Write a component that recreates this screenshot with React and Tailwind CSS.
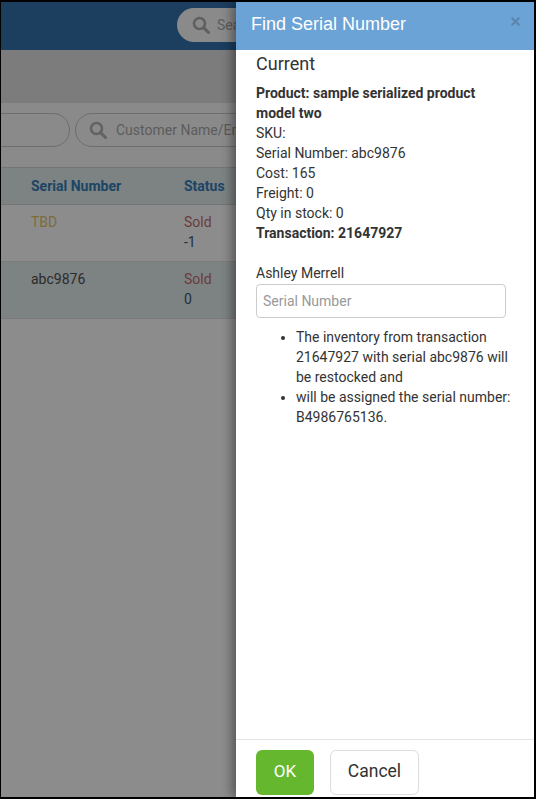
import React from 'react';
import { X } from 'lucide-react';

const SearchIcon = ({ className }) => (
  <svg viewBox="0 0 18 18" className={className} fill="none" stroke="currentColor">
    <circle cx="7.5" cy="7.5" r="5.5" strokeWidth="2.6" />
    <path d="M11.6 11.6 L16.5 16.5" strokeWidth="3" strokeLinecap="round" />
  </svg>
);

const rows = [
  { serial: 'TBD', serialClass: 'text-[#7d6c38]', qty: '-1', rowClass: 'bg-[#8c8c8c] h-[57px]' },
  { serial: 'abc9876', serialClass: 'text-[#2b2b2b]', qty: '0', rowClass: 'bg-[#7d8282] h-[57px]' },
];

const App = () => {
  return (
    <div className="relative w-[536px] h-[799px] overflow-hidden border-t-2 border-l border-r-2 border-b-2 border-black bg-[#8c8c8c] font-['Roboto',sans-serif] text-sm leading-5 text-[#333]">
      <div className="h-[48px] bg-[#1c3f60] pl-[176px] pt-[6px]">
        <div className="flex h-[34px] w-[200px] items-center rounded-full bg-[#8a8a8a] pl-[15px]">
          <SearchIcon className="h-[18px] w-[18px] text-[#5f5f5f]" />
          <span className="ml-[7px] text-[#5c5c5c]">Search</span>
        </div>
      </div>
      <div className="h-[53px] bg-[#7c7c7c]" />
      <div className="flex h-[64px] gap-[5px] bg-[#8a8a8a] pt-[10px]">
        <div className="ml-[-21px] h-[34px] w-[90px] rounded-full border border-[#6e6e6e]" />
        <div className="flex h-[34px] w-[240px] items-center rounded-full border border-[#6e6e6e] pl-[13px]">
          <SearchIcon className="h-[18px] w-[18px] text-[#636363]" />
          <span className="ml-[9px] whitespace-nowrap text-[#5c5c5c]">Customer Name/Email</span>
        </div>
      </div>
      <div className="flex h-[38px] items-center border-y border-[#757575] bg-[#7d8282] font-bold text-[#1b4565]">
        <div className="w-[183px] pl-[30px]">Serial Number</div>
        <div>Status</div>
      </div>
      {rows.map((row) => (
        <div key={row.serial} className={`flex border-b border-[#7b7b7b] pt-[7px] ${row.rowClass}`}>
          <div className={`w-[183px] pl-[30px] ${row.serialClass}`}>{row.serial}</div>
          <div>
            <div className="text-[#693c3c]">Sold</div>
            <div className="text-[#22303f]">{row.qty}</div>
          </div>
        </div>
      ))}

      <div className="absolute top-0 bottom-0 left-[235px] flex w-[299px] flex-col bg-white shadow-[-4px_0_10px_rgba(0,0,0,0.4)]">
        <div className="flex h-[48px] items-start justify-between bg-[#6ba3d6] pl-[15px] pr-[15px]">
          <h2 className="mt-[10px] font-['Liberation_Sans',sans-serif] text-lg leading-6 text-white">Find Serial Number</h2>
          <X className="mt-[13px] mr-[-2px] h-[13px] w-[13px] text-[#5d86ab]" strokeWidth={4} />
        </div>
        <div className="flex-1 px-5">
          <h3 className="mt-[1px] text-lg leading-[26px] text-[#333]">Current</h3>
          <div className="mt-[6px]">
            <div className="font-bold">Product: sample serialized product model two</div>
            <div>SKU:</div>
            <div>Serial Number: abc9876</div>
            <div>Cost: 165</div>
            <div>Freight: 0</div>
            <div>Qty in stock: 0</div>
            <div className="font-bold">Transaction: 21647927</div>
          </div>
          <div className="mt-[20px]">Ashley Merrell</div>
          <input
            placeholder="Serial Number"
            className="mt-[1px] block h-[34px] w-[250px] rounded border border-[#ccc] px-[6px] text-sm outline-none placeholder:text-[#999]"
          />
          <ul className="mt-[9px] w-[260px] list-disc pl-10">
            <li>The inventory from transaction 21647927 with serial abc9876 will be restocked and</li>
            <li>will be assigned the serial number: B4986765136.</li>
          </ul>
        </div>
        <div className="flex h-[58px] items-start gap-4 border-t border-[#e5e5e5] px-5 pt-[10px]">
          <button className="h-[45px] w-[58px] rounded-md bg-[#65b82e] pb-[3px] text-[17px] text-white">OK</button>
          <button className="h-[45px] w-[89px] rounded-md border border-[#ddd] bg-white pb-[3px] text-[17.5px] text-[#333]">Cancel</button>
        </div>
      </div>
    </div>
  );
};

export default App;
